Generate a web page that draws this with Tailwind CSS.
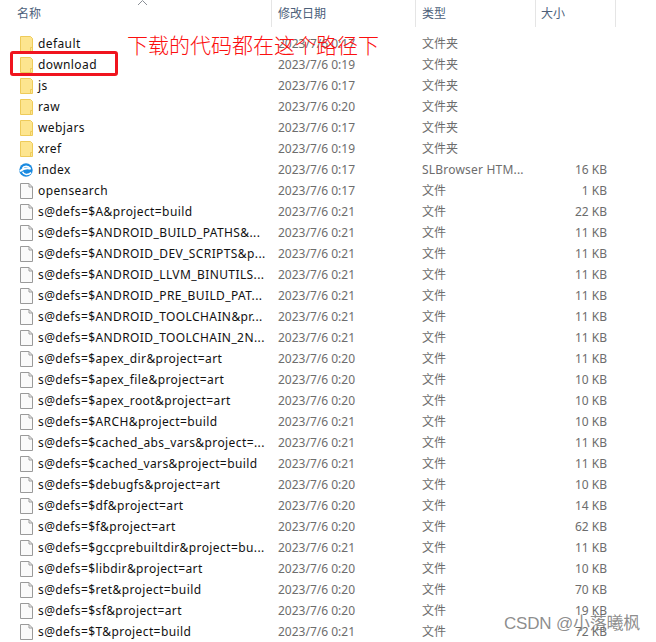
<!DOCTYPE html>
<html><head><meta charset="utf-8"><script src="https://cdn.jsdelivr.net/npm/@tailwindcss/browser@4"></script></head>
<body class="bg-white overflow-hidden">
<svg class="hidden"><defs>
<symbol id="folder" viewBox="0 0 14 16"><path d="M0.5 0.5H10.5L12.5 2.5V15.5H0.5Z" fill="#fde58f" stroke="#eecb5a"/><path d="M10.5 15.5V11.5H12.5" fill="none" stroke="#eecb5a"/></symbol>
<symbol id="file" viewBox="0 0 14 16"><path d="M0.5 0.5H9L12.5 4V15.5H0.5Z" fill="#fafafa" stroke="#9a9a9a"/><path d="M9 0.5V4H12.5" fill="none" stroke="#9a9a9a"/></symbol>
</defs></svg>
<div class="relative w-[656px] h-[642px] overflow-hidden bg-white font-['Noto_Sans','Noto_Sans_CJK_SC',sans-serif] text-[12px]">
<div class="flex h-[27px] text-[#4c607a] leading-[28px]">
  <div class="w-[272px] pl-[17px] border-r border-[#e5e5e5]">名称</div>
  <div class="w-[144px] pl-[6px] border-r border-[#e5e5e5]">修改日期</div>
  <div class="w-[120px] pl-[6px] border-r border-[#e5e5e5]">类型</div>
  <div class="w-[80px] pl-[5px] border-r border-[#e5e5e5]">大小</div>
</div>
<svg class="absolute left-[137px] top-0" width="12" height="6" viewBox="0 0 12 6"><path d="M1 5 L5.5 0.5 L10 5" fill="none" stroke="#8a8f96" stroke-width="1"/></svg>
<div class="pt-[6px] text-[#6d6d6d] [&>div]:flex [&>div]:h-[21px] [&>div]:items-center [&>div]:whitespace-nowrap [&_svg]:ml-[20px] [&_svg]:mr-[4px] [&_svg]:w-[14px] [&_svg]:h-[16px] [&_b]:w-[234px] [&_b]:font-normal [&_b]:tracking-[0.4px] [&_b]:text-[#111] [&_i]:not-italic [&_i]:w-[144px] [&_i]:pl-[6px] [&_u]:no-underline [&_u]:w-[120px] [&_u]:pl-[6px] [&_s]:no-underline [&_s]:w-[71px] [&_s]:text-right">
<div><svg><use href="#folder"/></svg><b>default</b><i>2023/7/6 0:17</i><u>文件夹</u></div>
<div><svg><use href="#folder"/></svg><b>download</b><i>2023/7/6 0:19</i><u>文件夹</u></div>
<div><svg><use href="#folder"/></svg><b>js</b><i>2023/7/6 0:17</i><u>文件夹</u></div>
<div><svg><use href="#folder"/></svg><b>raw</b><i>2023/7/6 0:20</i><u>文件夹</u></div>
<div><svg><use href="#folder"/></svg><b>webjars</b><i>2023/7/6 0:17</i><u>文件夹</u></div>
<div><svg><use href="#folder"/></svg><b>xref</b><i>2023/7/6 0:19</i><u>文件夹</u></div>
<div><svg class="-translate-x-[1px]" viewBox="0 0 15 16"><circle cx="7.5" cy="8" r="7.2" fill="#1a8ae0"/><path d="M1 9.3C4.5 6.2 8.5 5.6 12.6 6.6" fill="none" stroke="#fff" stroke-width="2.2"/><path d="M3.6 6.5C5 3.4 10 3 12 6.6M3.8 10C5 13.4 10 13.6 13 10.8" fill="none" stroke="#fff" stroke-width="1.6"/></svg><b>index</b><i>2023/7/6 0:17</i><u class="tracking-[0.2px]">SLBrowser HTM...</u><s>16 KB</s></div>
<div><svg><use href="#file"/></svg><b>opensearch</b><i>2023/7/6 0:17</i><u>文件</u><s>1 KB</s></div>
<div><svg><use href="#file"/></svg><b>s@defs=$A&amp;project=build</b><i>2023/7/6 0:21</i><u>文件</u><s>22 KB</s></div>
<div><svg><use href="#file"/></svg><b>s@defs=$ANDROID_BUILD_PATHS&amp;...</b><i>2023/7/6 0:21</i><u>文件</u><s>11 KB</s></div>
<div><svg><use href="#file"/></svg><b>s@defs=$ANDROID_DEV_SCRIPTS&amp;p...</b><i>2023/7/6 0:21</i><u>文件</u><s>11 KB</s></div>
<div><svg><use href="#file"/></svg><b>s@defs=$ANDROID_LLVM_BINUTILS...</b><i>2023/7/6 0:21</i><u>文件</u><s>11 KB</s></div>
<div><svg><use href="#file"/></svg><b>s@defs=$ANDROID_PRE_BUILD_PAT...</b><i>2023/7/6 0:21</i><u>文件</u><s>11 KB</s></div>
<div><svg><use href="#file"/></svg><b>s@defs=$ANDROID_TOOLCHAIN&amp;pr...</b><i>2023/7/6 0:21</i><u>文件</u><s>11 KB</s></div>
<div><svg><use href="#file"/></svg><b>s@defs=$ANDROID_TOOLCHAIN_2N...</b><i>2023/7/6 0:21</i><u>文件</u><s>11 KB</s></div>
<div><svg><use href="#file"/></svg><b>s@defs=$apex_dir&amp;project=art</b><i>2023/7/6 0:20</i><u>文件</u><s>11 KB</s></div>
<div><svg><use href="#file"/></svg><b>s@defs=$apex_file&amp;project=art</b><i>2023/7/6 0:20</i><u>文件</u><s>10 KB</s></div>
<div><svg><use href="#file"/></svg><b>s@defs=$apex_root&amp;project=art</b><i>2023/7/6 0:20</i><u>文件</u><s>10 KB</s></div>
<div><svg><use href="#file"/></svg><b>s@defs=$ARCH&amp;project=build</b><i>2023/7/6 0:21</i><u>文件</u><s>10 KB</s></div>
<div><svg><use href="#file"/></svg><b>s@defs=$cached_abs_vars&amp;project=...</b><i>2023/7/6 0:21</i><u>文件</u><s>11 KB</s></div>
<div><svg><use href="#file"/></svg><b>s@defs=$cached_vars&amp;project=build</b><i>2023/7/6 0:21</i><u>文件</u><s>11 KB</s></div>
<div><svg><use href="#file"/></svg><b>s@defs=$debugfs&amp;project=art</b><i>2023/7/6 0:20</i><u>文件</u><s>10 KB</s></div>
<div><svg><use href="#file"/></svg><b>s@defs=$df&amp;project=art</b><i>2023/7/6 0:20</i><u>文件</u><s>14 KB</s></div>
<div><svg><use href="#file"/></svg><b>s@defs=$f&amp;project=art</b><i>2023/7/6 0:20</i><u>文件</u><s>62 KB</s></div>
<div><svg><use href="#file"/></svg><b>s@defs=$gccprebuiltdir&amp;project=bu...</b><i>2023/7/6 0:21</i><u>文件</u><s>11 KB</s></div>
<div><svg><use href="#file"/></svg><b>s@defs=$libdir&amp;project=art</b><i>2023/7/6 0:20</i><u>文件</u><s>10 KB</s></div>
<div><svg><use href="#file"/></svg><b>s@defs=$ret&amp;project=build</b><i>2023/7/6 0:20</i><u>文件</u><s>70 KB</s></div>
<div><svg><use href="#file"/></svg><b>s@defs=$sf&amp;project=art</b><i>2023/7/6 0:20</i><u>文件</u><s>19 KB</s></div>
<div><svg><use href="#file"/></svg><b>s@defs=$T&amp;project=build</b><i>2023/7/6 0:21</i><u>文件</u><s>72 KB</s></div>
</div>
<div class="absolute left-[127px] top-[30px] text-[21px] leading-[28px] font-light text-[#fb0f0f] font-['Noto_Sans_CJK_SC',sans-serif]">下载的代码都在这个路径下</div>
<div class="absolute left-[10px] top-[51px] w-[108px] h-[25px] border-[3px] border-[#f0141e] rounded-[3px]"></div>
<div class="absolute left-[504px] top-[612px] text-[17px] leading-[24px] tracking-[-0.2px] text-[#6f6f6f]/80 whitespace-nowrap font-['Liberation_Sans','Noto_Sans_CJK_SC',sans-serif]">CSDN @小落曦枫</div>
</div>
</body></html>
